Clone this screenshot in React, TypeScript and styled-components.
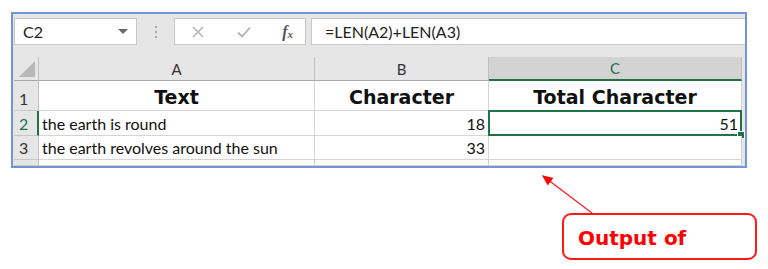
import styled, { createGlobalStyle } from "styled-components";

const GlobalStyle = createGlobalStyle`
  html, body {
    margin: 0;
    padding: 0;
    background: #ffffff;
  }
  body {
    font-family: "Lato", "Liberation Sans", sans-serif;
  }
`;

const columns = [
  { key: "A", width: 276 },
  { key: "B", width: 174 },
  { key: "C", width: 253 },
];

const rows = [
  { num: 1, height: 30, cells: ["Text", "Character", "Total Character"], head: true },
  { num: 2, height: 25, cells: ["the earth is round", "18", "51"] },
  { num: 3, height: 24, cells: ["the earth revolves around the sun", "33", ""] },
];

const selectedCol = "C";
const selectedRow = 2;

export default function App() {
  return (
    <>
      <GlobalStyle />
      <Page>
        <Sheet>
          <Toolbar>
            <NameBox>
              <span>C2</span>
              <DropArrow />
            </NameBox>
            <Grip>
              <i />
              <i />
              <i />
            </Grip>
            <FormulaButtons>
              <svg width="14" height="14" viewBox="0 0 14 14">
                <path d="M2 2 L12 12 M12 2 L2 12" stroke="#b4b4b4" strokeWidth="1.6" fill="none" />
              </svg>
              <svg width="16" height="14" viewBox="0 0 16 14">
                <path d="M2 7.5 L6 11.5 L14 2.5" stroke="#b4b4b4" strokeWidth="1.8" fill="none" />
              </svg>
              <FxLabel>
                f<sub>x</sub>
              </FxLabel>
            </FormulaButtons>
            <FormulaBar>=LEN(A2)+LEN(A3)</FormulaBar>
          </Toolbar>

          <Grid>
            <Row>
              <CornerCell>
                <svg width="16" height="16" viewBox="0 0 16 16">
                  <path d="M16 0 L16 16 L0 16 Z" fill="#b8b8b8" />
                </svg>
              </CornerCell>
              {columns.map((c) => (
                <ColHeader key={c.key} $w={c.width} $active={c.key === selectedCol}>
                  {c.key}
                </ColHeader>
              ))}
              <Filler />
            </Row>

            {rows.map((r) => (
              <Row key={r.num}>
                <RowHeader $h={r.height} $active={r.num === selectedRow}>
                  {r.num}
                </RowHeader>
                {r.cells.map((txt, i) => (
                  <Cell
                    key={i}
                    $w={columns[i].width}
                    $h={r.height}
                    $head={!!r.head}
                    $num={!r.head && i > 0}
                  >
                    {txt}
                    {r.num === selectedRow && columns[i].key === selectedCol && (
                      <Selection>
                        <FillHandle />
                      </Selection>
                    )}
                  </Cell>
                ))}
                <Filler />
              </Row>
            ))}
            <Row>
              <RowHeader $h={6} />
              {columns.map((c) => (
                <Cell key={c.key} $w={c.width} $h={6} />
              ))}
              <Filler />
            </Row>
          </Grid>
        </Sheet>

        <Callout>Output of</Callout>

        <ArrowLayer width="768" height="269" viewBox="0 0 768 269">
          <defs>
            <marker id="head" markerWidth="10" markerHeight="10" refX="8" refY="5" orient="auto">
              <path d="M0 1 L9 5 L0 9 Z" fill="#ff0000" />
            </marker>
          </defs>
          <line x1="592" y1="213" x2="543" y2="176" stroke="#ff1a1a" strokeWidth="1.2" markerEnd="url(#head)" />
        </ArrowLayer>
      </Page>
    </>
  );
}

const Page = styled.div`
  position: relative;
  width: 768px;
  height: 269px;
  padding: 12px 0 0 11px;
  box-sizing: border-box;
  overflow: hidden;
`;

const Sheet = styled.div`
  width: 736px;
  height: 156px;
  box-sizing: border-box;
  border: 2px solid #7195d8;
  background: #e6e6e6;
  display: flex;
  flex-direction: column;
  overflow: hidden;
`;

const Toolbar = styled.div`
  display: flex;
  align-items: stretch;
  height: 30px;
  margin: 4px 0 12px 1px;
`;

const NameBox = styled.div`
  width: 123px;
  box-sizing: border-box;
  background: #fff;
  border: 1px solid #c8c8c8;
  display: flex;
  align-items: center;
  justify-content: space-between;
  padding: 0 8px 0 8px;
  font-family: "Lato", "Liberation Sans", sans-serif;
  font-size: 16px;
  color: #222;
`;

const DropArrow = styled.span`
  width: 0;
  height: 0;
  border-left: 5px solid transparent;
  border-right: 5px solid transparent;
  border-top: 5px solid #6a6a6a;
`;

const Grip = styled.div`
  width: 37px;
  display: flex;
  flex-direction: column;
  align-items: center;
  justify-content: center;
  gap: 3px;
  i {
    width: 2px;
    height: 2px;
    background: #a8a8a8;
  }
`;

const FormulaButtons = styled.div`
  width: 132px;
  box-sizing: border-box;
  background: #fff;
  border: 1px solid #c8c8c8;
  display: flex;
  align-items: center;
  justify-content: space-between;
  padding: 0 12px 0 16px;
`;

const FxLabel = styled.span`
  font-family: "Liberation Serif", serif;
  font-style: italic;
  font-weight: bold;
  font-size: 16px;
  color: #555;
  sub {
    font-size: 11px;
    vertical-align: -1px;
  }
`;

const FormulaBar = styled.div`
  flex: 1;
  margin-left: 5px;
  background: #fff;
  border: 1px solid #c8c8c8;
  border-right: none;
  display: flex;
  align-items: center;
  padding-left: 13px;
  font-family: "Lato", "Liberation Sans", sans-serif;
  font-size: 16px;
  color: #222;
`;

const Grid = styled.div`
  display: flex;
  flex-direction: column;
  margin-left: 1px;
  background: #e6e6e6;
`;

const Row = styled.div`
  display: flex;
`;

const CornerCell = styled.div`
  width: 25px;
  height: 24px;
  box-sizing: border-box;
  border-right: 1px solid #c0c0c0;
  border-bottom: 1px solid #a8a8a8;
  display: flex;
  align-items: flex-end;
  justify-content: flex-end;
  padding: 0 3px 3px 0;
`;

const ColHeader = styled.div<{ $w: number; $active?: boolean }>`
  width: ${(p) => p.$w}px;
  height: 24px;
  box-sizing: border-box;
  background: ${(p) => (p.$active ? "#d3d3d3" : "#e6e6e6")};
  border-right: 1px solid #c0c0c0;
  border-bottom: ${(p) => (p.$active ? "2px solid #217346" : "1px solid #a8a8a8")};
  display: flex;
  align-items: center;
  justify-content: center;
  font-family: "Lato", "Liberation Sans", sans-serif;
  font-size: 15px;
  color: ${(p) => (p.$active ? "#217346" : "#333")};
`;

const Filler = styled.div`
  flex: 1;
`;

const RowHeader = styled.div<{ $h: number; $active?: boolean }>`
  width: 25px;
  height: ${(p) => p.$h}px;
  box-sizing: border-box;
  background: #e6e6e6;
  border-right: ${(p) => (p.$active ? "2px solid #217346" : "1px solid #c0c0c0")};
  border-bottom: 1px solid #c8c8c8;
  display: flex;
  align-items: flex-end;
  padding: 0 0 2px 5px;
  font-family: "Lato", "Liberation Sans", sans-serif;
  font-size: 16px;
  color: ${(p) => (p.$active ? "#217346" : "#333")};
  overflow: hidden;
`;

const Cell = styled.div<{ $w: number; $h: number; $head?: boolean; $num?: boolean }>`
  position: relative;
  width: ${(p) => p.$w}px;
  height: ${(p) => p.$h}px;
  box-sizing: border-box;
  background: #fff;
  border-right: 1px solid #d4d4d4;
  border-bottom: 1px solid #d4d4d4;
  display: flex;
  align-items: flex-end;
  justify-content: ${(p) => (p.$head ? "center" : p.$num ? "flex-end" : "flex-start")};
  padding: ${(p) => (p.$head ? "0 0 2px 0" : "0 3px 2px 3px")};
  font-family: ${(p) => (p.$head ? '"DejaVu Sans", "Liberation Sans", sans-serif' : '"Lato", "Liberation Sans", sans-serif')};
  font-weight: ${(p) => (p.$head ? 700 : 400)};
  font-size: ${(p) => (p.$head ? "19px" : "16px")};
  color: #111;
  white-space: nowrap;
`;

const Selection = styled.div`
  position: absolute;
  left: -1px;
  top: -1px;
  right: -1px;
  bottom: -1px;
  border: 2px solid #217346;
`;

const FillHandle = styled.div`
  position: absolute;
  right: -5px;
  bottom: -5px;
  width: 6px;
  height: 6px;
  background: #217346;
  border: 1px solid #fff;
`;

const Callout = styled.div`
  width: 195px;
  height: 47px;
  box-sizing: border-box;
  margin: 45px 0 0 551px;
  border: 2px solid #ff1a1a;
  border-radius: 9px;
  display: flex;
  align-items: center;
  padding: 3px 0 0 14px;
  font-family: "DejaVu Sans", "Liberation Sans", sans-serif;
  font-weight: bold;
  font-size: 20px;
  color: #ff0000;
`;

const ArrowLayer = styled.svg`
  position: absolute;
  left: 0;
  top: 0;
  pointer-events: none;
`;
